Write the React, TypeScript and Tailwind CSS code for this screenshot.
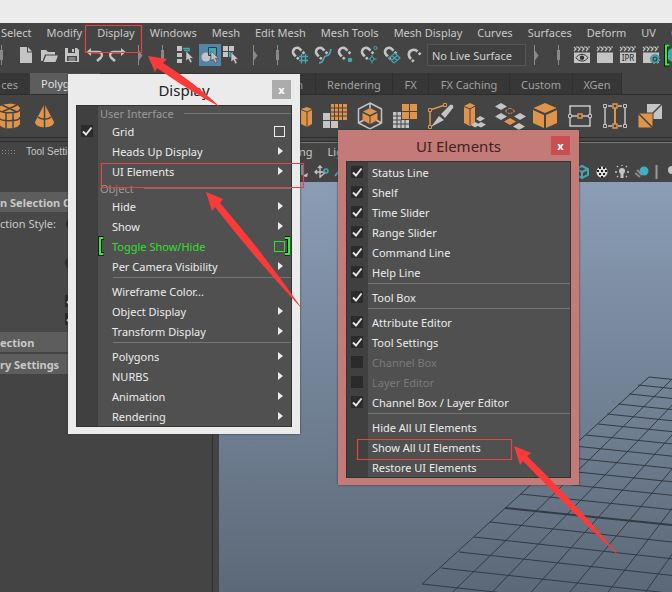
import React from 'react';
import clsx from 'clsx';

const MENUS = [
    'Select', 'Modify', 'Display', 'Windows', 'Mesh', 'Edit Mesh', 'Mesh Tools',
    'Mesh Display', 'Curves', 'Surfaces', 'Deform', 'UV', 'Cache',
];

const ORANGE = '#e0944a';
const LIGHT = '#c4c4c4';
const TEAL = '#45a5b3';

type MenuEntry = {
    label?: string;
    kind: 'item' | 'submenu' | 'option' | 'check' | 'header' | 'separator';
    checked?: boolean;
    disabled?: boolean;
    optionBox?: boolean;
    isNew?: boolean;
};

const displayMenu: MenuEntry[] = [
    { kind: 'header', label: 'User Interface' },
    { kind: 'check', label: 'Grid', checked: true, optionBox: true },
    { kind: 'submenu', label: 'Heads Up Display' },
    { kind: 'submenu', label: 'UI Elements' },
    { kind: 'header', label: 'Object' },
    { kind: 'submenu', label: 'Hide' },
    { kind: 'submenu', label: 'Show' },
    { kind: 'option', label: 'Toggle Show/Hide', optionBox: true, isNew: true },
    { kind: 'submenu', label: 'Per Camera Visibility' },
    { kind: 'separator' },
    { kind: 'item', label: 'Wireframe Color...' },
    { kind: 'submenu', label: 'Object Display' },
    { kind: 'submenu', label: 'Transform Display' },
    { kind: 'separator' },
    { kind: 'submenu', label: 'Polygons' },
    { kind: 'submenu', label: 'NURBS' },
    { kind: 'submenu', label: 'Animation' },
    { kind: 'submenu', label: 'Rendering' },
];

const uiElementsMenu: MenuEntry[] = [
    { kind: 'check', label: 'Status Line', checked: true },
    { kind: 'check', label: 'Shelf', checked: true },
    { kind: 'check', label: 'Time Slider', checked: true },
    { kind: 'check', label: 'Range Slider', checked: true },
    { kind: 'check', label: 'Command Line', checked: true },
    { kind: 'check', label: 'Help Line', checked: true },
    { kind: 'separator' },
    { kind: 'check', label: 'Tool Box', checked: true },
    { kind: 'separator' },
    { kind: 'check', label: 'Attribute Editor', checked: true },
    { kind: 'check', label: 'Tool Settings', checked: true },
    { kind: 'check', label: 'Channel Box', disabled: true },
    { kind: 'check', label: 'Layer Editor', disabled: true },
    { kind: 'check', label: 'Channel Box / Layer Editor', checked: true },
    { kind: 'separator' },
    { kind: 'item', label: 'Hide All UI Elements' },
    { kind: 'item', label: 'Show All UI Elements' },
    { kind: 'item', label: 'Restore UI Elements' },
];

/* ---------- status line icons, 23 x 23 ---------- */

const Cursor: React.FC<{ x: number; y: number }> = ({ x, y }) => (
    <path transform={`translate(${x} ${y})`} d="M0 0v10l2.4-2 1.8 4 2-.9-1.8-3.8h3.1z" fill={LIGHT} stroke="#444" strokeWidth=".6" />
);

const Magnet = () => (
    <g fill="none" stroke={LIGHT} strokeWidth="2.6">
        <path d="M10.500 6.700 8.700 4.900A4 4 0 0 0 3 10.500l1.800 1.800" />
        <path d="m11.600 7.800 1.800 1.800M5.900 13.400l1.800 1.800" />
    </g>
);

const Clapper: React.FC<{ children?: React.ReactNode }> = ({ children }) => (
    <>
        <path d="M2 8.500h16v10.500H2z" fill={LIGHT} />
        <path d="m2 3 2 2-2 2M6 3l2 2-2 2M10 3l2 2-2 2M14 3l2 2-2 2M4 3h2M8 3h2M12 3h2M16 3h2" fill="none" stroke={LIGHT} strokeWidth="1.200" />
        {children}
    </>
);

const statusIcons: Record<string, React.ReactNode> = {
    handle: (
        <>
            <path d="M9.500 1v20" stroke="#8a8a8a" />
            <path d="M8 6h3v10H8z" fill="#8a8a8a" />
        </>
    ),
    collapse: (
        <>
            <path d="M8.500 1v20" stroke="#8a8a8a" />
            <path d="m8.500 6 4 5.500-4 5.500z" fill="#8a8a8a" />
        </>
    ),
    newScene: <path d="M5 3h7v5.500h5V19H5zM13 3l4 4.500h-4z" fill={LIGHT} />,
    open: <path d="M3 17V6h5l2 2h7v2.500H7L4.500 17zM5.500 18 8 11.500h12L17.500 18z" fill={LIGHT} />,
    save: (
        <>
            <path d="M4 4h12l2 2v12H4z" fill={LIGHT} />
            <path d="M7 4h7v5H7zM6 12h10v5H6z" fill="#444" />
            <path d="M11 5h2v3h-2zM7.500 13.500h7v1h-7zM7.500 15.500h7v1h-7z" fill={LIGHT} />
        </>
    ),
    undo: (
        <>
            <path d="M6 8h8.500c4 0 4 4 2.500 5.500L13 17" fill="none" stroke={LIGHT} strokeWidth="2.400" />
            <path d="m2.500 8 4.500-4v8z" fill={LIGHT} />
        </>
    ),
    redo: (
        <>
            <path d="M15 8H6.500c-4 0-4 4-2.500 5.500L8 17" fill="none" stroke={LIGHT} strokeWidth="2.400" />
            <path d="M18.500 8 14 4v8z" fill={LIGHT} />
        </>
    ),
    selHierarchy: (
        <>
            <path d="M1 2h5v5H1zM1 9h5v4H1zM1 15h5v4H1z" fill={LIGHT} />
            <path d="M7 4.500h6v3M8 6.500h3v4" fill="none" stroke={TEAL} strokeWidth="1.500" />
            <Cursor x={10} y={7} />
        </>
    ),
    selObject: (
        <>
            <path d="M0 0h22v22H0z" fill="#5285a6" />
            <circle cx="7" cy="13" r="4.500" fill={LIGHT} />
            <path d="M9.500 3.500h8v8h-8z" fill={TEAL} stroke="#2d3e48" />
            <Cursor x={12} y={7} />
        </>
    ),
    selComponent: (
        <>
            <path d="M1 2h5v5H1zM7 2h5v5H7zM1 8h5v5H1z" fill={LIGHT} />
            <path d="M7 8h4v5H7z" fill={TEAL} />
            <Cursor x={9} y={8} />
        </>
    ),
    snapGrid: (
        <>
            <Magnet />
            <path d="M8 12.500h9M8 16.500h9M10.500 10v9.500M14.500 10v9.500" stroke={TEAL} strokeWidth="1.300" />
        </>
    ),
    snapCurve: (
        <>
            <Magnet />
            <path d="M5 19c6 0 3-6 7-7s4-3 5-7" fill="none" stroke={TEAL} strokeWidth="1.800" />
        </>
    ),
    snapPoint: (
        <>
            <Magnet />
            <circle cx="13" cy="16" r="2.300" fill={TEAL} />
        </>
    ),
    snapCenter: (
        <>
            <Magnet />
            <circle cx="15.500" cy="4" r="1.600" fill="none" stroke={TEAL} />
            <circle cx="12" cy="15" r="2" fill="none" stroke={TEAL} />
            <path d="M12 11v2M12 17v2.500M8.500 15H10M14 15h2.500" stroke={TEAL} />
        </>
    ),
    snapPlane: (
        <>
            <Magnet />
            <path d="m12 9 5 5-6 5-5-5zM9 11.500l5 5M14.500 11.500l-6 5" fill="none" stroke={TEAL} strokeWidth="1.200" />
        </>
    ),
    live: (
        <g fill="none" stroke={LIGHT} strokeWidth="2.600">
            <path d="M11.500 7.500C8 4 2.500 6.500 2.800 11c.2 2 1.200 3 2.200 4" />
            <path d="m12.800 8.800 1.700 1.700M6 16l1.700 1.700" />
        </g>
    ),
    renderView: (
        <Clapper>
            <path d="M4 13.700c3-4.500 9-4.500 12 0-3 4.500-9 4.500-12 0z" fill="none" stroke="#333" />
            <circle cx="10" cy="13.700" r="2.200" fill="#333" />
        </Clapper>
    ),
    render: <Clapper />,
    ipr: (
        <Clapper>
            <text x="10" y="17" textAnchor="middle" fontSize="8" fill="#222">IPR</text>
        </Clapper>
    ),
    renderSettings: (
        <Clapper>
            <circle cx="14" cy="15" r="4.500" fill="#444" />
            <circle cx="14" cy="15" r="3.300" fill="none" stroke={TEAL} strokeWidth="1.500" />
            <circle cx="14" cy="15" r="4.500" fill="none" stroke={TEAL} strokeWidth="1.400" strokeDasharray="1.700 1.800" />
            <circle cx="14" cy="15" r="1.200" fill={TEAL} />
        </Clapper>
    ),
    hypershade: (
        <>
            <circle cx="10" cy="11" r="7" fill={TEAL} />
            <path d="M5.500 1.500H2v19h3.500" fill="none" stroke="#111" strokeWidth="4" />
            <path d="M5.500 1.500H2v19h3.500" fill="none" stroke="#2cf02c" strokeWidth="2" />
        </>
    ),
};

const StatusButton: React.FC<{ name: string }> = ({ name }) => (
    <button type="button" aria-label={name} className="h-[23px] w-[23px] shrink-0">
        <svg width="23" height="23" viewBox="0 0 23 23">{statusIcons[name]}</svg>
    </button>
);

const statusLeft = [
    'handle', 'newScene', 'open', 'save', 'undo', 'redo', 'collapse', 'handle', 'selHierarchy', 'selObject',
    'selComponent', 'collapse', 'handle', 'snapGrid', 'snapCurve', 'snapPoint', 'snapCenter', 'snapPlane', 'live',
];
const statusRight = ['collapse', 'handle', 'renderView', 'render', 'ipr', 'renderSettings', 'hypershade'];

/* ---------- shelf icons, 28 x 28 ---------- */

const shelfIcons: Record<string, React.ReactNode> = {
    cylinder: (
        <>
            <path d="M3 7c0-7 21-7 21 0v14c0 7-21 7-21 0z" fill={ORANGE} />
            <path d="M3 7c0 5 21 5 21 0M3 15c0 5 21 5 21 0M10 11v15M17 11v15M6 3l15 7M21 3 6 10" fill="none" stroke="#444" strokeWidth="1.500" />
        </>
    ),
    cone: (
        <>
            <path d="M13.500 2 23 20c0 7-19 7-19 0z" fill={ORANGE} />
            <path d="M13.500 2v24M7 15c3 3 10 3 13 0" fill="none" stroke="#444" strokeWidth="1.500" />
        </>
    ),
    cube: (
        <>
            <path d="m21 5 5 2v15l-5 3-6-3V7z" fill={ORANGE} />
            <path d="M15 7.500 21 10l5-2.500M21 10v15" fill="none" stroke="#444" />
            <path d="M13 2v24" stroke={LIGHT} strokeDasharray="2 2" />
        </>
    ),
    smooth: (
        <>
            <path d="M10 2h16v16H10z" fill={ORANGE} />
            <path d="M13.500 2v16M17.500 2v16M21.500 2v16M10 6h16M10 10h16M10 14h16" stroke="#444" />
            <path d="M2 11h7v7H2zM2 19h7v7H2zM10 19h7v7h-7z" fill={LIGHT} />
        </>
    ),
    cage: (
        <>
            <path d="m14 1 11.500 6v14L14 27 2.500 21V7zM14 1v5M2.500 21 8 18M25.500 21 20 18" fill="none" stroke={LIGHT} strokeWidth="1.500" />
            <path d="m14 6 7 3.500-7 3.500-7-3.500zM6.500 11l7 3.500V22l-7-4zM21.500 11l-7 3.500V22l7-4z" fill={ORANGE} />
        </>
    ),
    reduce: (
        <>
            <path d="M11 2h7v7h-7zM19 2h7v7h-7zM11 10h7v7h-7zM19 10h7v7h-7z" fill={ORANGE} />
            <path d="M2 10h8v8h8v8H2z" fill={LIGHT} />
            <path d="M6 10v16M10 18v8M14 18v8M2 14h8M2 18h8M2 22h16" stroke="#444" />
        </>
    ),
    draw: (
        <>
            <path d="M4 8v17M4 8l15-5" stroke={ORANGE} strokeWidth="1.500" />
            <path d="M2.500 6.500h3v3h-3zM17.500 1.500h3v3h-3zM2.500 23.500h3v3h-3z" fill="#444" stroke={ORANGE} />
            <path d="m5 25 8-11 5 4zM15 12l9-9c3-1 4 1 3 3l-8 10z" fill={LIGHT} />
        </>
    ),
    extrude: (
        <>
            <path d="m9 1 5 2.500v17L9 24l-6-3V4z" fill={ORANGE} />
            <path d="m3 4.500 6 2.500 5-3M9 7v16" fill="none" stroke="#444" />
            <path d="m19 14 5 2.500-5 3-4-2.500zM14 20l5 2.500-5 3-4-2.500zM20 20l5 2.500-5 3-5-2.500z" fill={LIGHT} />
        </>
    ),
    faces: (
        <>
            <path d="m5 1 6 3.500-6 3.500-6-3.500zM5 11l6 3.500L5 18l-6-3.500zM24 11l6 3.500-6 3.500-6-3.500zM23 21l6 3.500-6 3.500-6-3.500z" fill={LIGHT} />
            <path d="m14 16 6 3.500-6 3.500-6-3.500z" fill={ORANGE} />
            <path d="m14 6 5 3-5 3-5-3z" fill="none" stroke={ORANGE} strokeDasharray="2 1" />
        </>
    ),
    solid: <path d="m14 1 11.500 5L14 11 2.500 6zM2 8l11 5v13L2 21zM26 8l-11 5v13l11-5z" fill={ORANGE} />,
    insertLoop: (
        <>
            <path d="M4 4h20v20H4z" fill="none" stroke={LIGHT} strokeWidth="1.500" />
            <path d="M4 14h20" stroke={LIGHT} strokeWidth="1.500" />
            <path d="M2.500 12.500h3v3h-3zM22.500 12.500h3v3h-3z" fill="#444" stroke={LIGHT} />
            <path d="M12 12h4v4h-4z" fill="#444" stroke={ORANGE} strokeWidth="1.500" />
        </>
    ),
    offsetLoop: (
        <>
            <path d="M4 4v20M24 4v20M7 4h4M17 4h4M7 24h4M17 24h4" fill="none" stroke={LIGHT} strokeWidth="1.500" />
            <path d="M14 4v20" stroke={ORANGE} strokeWidth="2" />
            <path d="M2.500 2.500h3v3h-3zM22.500 2.500h3v3h-3zM2.500 22.500h3v3h-3zM22.500 22.500h3v3h-3z" fill="#444" stroke={LIGHT} />
            <path d="M12 2h4v4h-4zM12 22h4v4h-4z" fill="#444" stroke={ORANGE} strokeWidth="1.500" />
        </>
    ),
    triangulate: (
        <>
            <path d="M11 2h15v15H11z" fill={LIGHT} />
            <path d="M2 11h15v15H2z" fill={ORANGE} stroke="#444" />
            <path d="m17 11 9-9M2 11l15 15" stroke="#444" strokeWidth="1.500" />
        </>
    ),
};

const ShelfButton: React.FC<{ name: string }> = ({ name }) => (
    <button type="button" aria-label={name} className="flex w-[35px] shrink-0 justify-center">
        <svg width="28" height="28" viewBox="0 0 28 28" className="overflow-visible">{shelfIcons[name]}</svg>
    </button>
);

const shelfTabs = [
    { label: 'Rendering', width: 'w-[77px]' },
    { label: 'FX', width: 'w-[36px]' },
    { label: 'FX Caching', width: 'w-[81px]' },
    { label: 'Custom', width: 'w-[63px]' },
    { label: 'XGen', width: 'w-[49px]' },
];

/* ---------- menus ---------- */

type CheckBoxProps = { id: string; label?: string; checked?: boolean; disabled?: boolean };

const CheckBox: React.FC<CheckBoxProps> = ({ id, label, checked, disabled }) => (
    <span className="relative flex h-3 w-3 bg-[#2b2b2b]">
        <input id={id} type="checkbox" aria-label={label} defaultChecked={checked} disabled={disabled} className="peer h-3 w-3 appearance-none" />
        <svg viewBox="0 0 12 12" className="pointer-events-none absolute inset-0 hidden peer-checked:block">
            <path d="m2 6.500 3 3L10.500 2.500" fill="none" stroke="#e6e6e6" strokeWidth="1.900" />
        </svg>
    </span>
);

const MenuRow: React.FC<{ entry: MenuEntry; id: string; compact?: boolean }> = ({ entry, id, compact }) => {
    const indent = compact ? 'pl-[5px]' : 'pl-[15px]';

    if (entry.kind === 'separator') {
        return (
            <div className={clsx('flex h-[5px] items-start pt-px', compact ? 'ml-[21px]' : 'ml-[36px]')}>
                <hr className="w-full border-[#757575]" />
            </div>
        );
    }
    if (entry.kind === 'header') {
        return (
            <div className="ml-[23px] flex h-[15px] items-center gap-2.5 text-[#9a9a9a]">
                <span>{entry.label}</span>
                <hr className="flex-1 border-[#757575]" />
            </div>
        );
    }
    return (
        <div className={clsx('relative flex h-5 items-center', entry.disabled ? 'text-[#7a7a7a]' : entry.isNew ? 'text-[#2ce02c]' : 'text-[#ececec]')}>
            <span className="flex w-[20px] justify-end pr-1">
                {entry.kind === 'check' && <CheckBox id={id} checked={entry.checked} disabled={entry.disabled} />}
            </span>
            {entry.kind === 'check' ? (
                <label htmlFor={id} className={clsx('flex-1', indent)}>{entry.label}</label>
            ) : (
                <button type="button" className={clsx('flex-1 text-left', indent)}>{entry.label}</button>
            )}
            {entry.kind === 'submenu' && (
                <svg width="5" height="8" viewBox="0 0 5 8" className="mr-2"><path d="M0 0l5 4-5 4z" fill="#ececec" /></svg>
            )}
            {entry.optionBox && (
                <button type="button" aria-label={`${entry.label} options`} className="mr-1.5 h-[11px] w-[11px] border border-current" />
            )}
            {entry.isNew && (
                <svg width="192" height="20" viewBox="0 0 192 20" className="pointer-events-none absolute left-[21px] top-0">
                    <g fill="none">
                        <path d="M6 2H2v16h4M187 2h4v16h-4" stroke="#111" strokeWidth="4" />
                        <path d="M5.500 2H2v16h3.500M187 2h4v16h-4" stroke="#2cf02c" strokeWidth="2" />
                    </g>
                </svg>
            )}
        </div>
    );
};

type TornOffMenuProps = { title: string; entries: MenuEntry[]; active?: boolean; compact?: boolean; className: string };

const TornOffMenu: React.FC<TornOffMenuProps> = ({ title, entries, active, compact, className }) => (
    <section className={clsx('absolute shadow-[0_0_2px_#333]', className, active ? 'bg-[#c47a76]' : 'bg-[#ebebeb]')}>
        <header className="relative flex h-[31px] items-center justify-center">
            <h2 className={clsx('text-[15px] leading-5', active ? 'text-[#3d2322]' : 'text-[#222]')}>{title}</h2>
            <button
                type="button"
                aria-label={`Close ${title}`}
                className={clsx('absolute right-[9px] top-1.5 h-[19px] w-[19px] text-[11px] font-bold leading-4 text-white', active ? 'bg-[#c94f50]' : 'bg-[#acacac]')}
            >
                x
            </button>
        </header>
        <div className="mx-2 mb-[7px] border border-[#333] bg-[linear-gradient(to_right,#404040_21px,#505050_21px)]">
            {entries.map((entry, i) => (
                <MenuRow key={i} entry={entry} id={`${title}-${i}`} compact={compact} />
            ))}
        </div>
    </section>
);

/* ---------- perspective grid ---------- */

const rowStarts = [
    [649, 377], [638, 385], [629, 394], [618, 404], [607, 414], [598, 424], [586, 435], [574, 446],
    [562, 457], [548, 469], [534, 481], [520, 494], [490, 522], [474, 537], [459, 552], [441, 568], [422, 584],
];

const ViewportGrid = () => (
    <svg width="453" height="410" viewBox="219 182 453 410" className="absolute left-0 top-0" fill="none" stroke="#343b42">
        <path d="M649 377 422 584" />
        {rowStarts.map(([x, y]) => (
            <path key={y} d={`M${x} ${y}l300 ${y > 500 ? 33 : 31}`} />
        ))}
        {[1, 2, 3, 4, 5, 6, 7].map((k) => {
            const x = 505 + 31 * k;
            const y = 508 + 3.2 * k;
            const dx = 144 - 8 * k;
            const dy = -131 - k;
            return <path key={k} d={`M${x + dx} ${y + dy}L${x - dx} ${y - dy}`} />;
        })}
        <path d="m505 508 167 17" strokeWidth="2" />
    </svg>
);

const Annotations = () => (
    <svg width="672" height="592" viewBox="0 0 672 592" className="pointer-events-none absolute left-0 top-0">
        <path
            d="M85.500 25.500h56v27h-56zM101.500 163.500h202v24h-202zM357.500 439.500h154v20h-154z"
            fill="none"
            stroke="#e64340"
            strokeWidth="1.200"
        />
        <g fill="#fb3b3a">
            <path d="m148 56 19 3-4 4Q194 82 220 107 188 90 157 68l-2 4z" />
            <path d="m206 192 17 7-3 4Q264 254 303 310 257 261 215 207l-3 4z" />
            <path d="m514 446 17 7-4 3Q576 503 620 557 571 511 523 461l-3 4z" />
        </g>
    </svg>
);

export default function App() {
    return (
        <div className="relative flex min-h-screen flex-col overflow-hidden bg-[#444] font-['Noto_Sans','Open_Sans',sans-serif] text-[11px] leading-[15px] text-[#c8c8c8]">
            <div className="h-[23px] shrink-0 bg-[#ebebeb]" />
            <nav className="flex h-[21px] shrink-0 items-center gap-[15px] overflow-hidden whitespace-nowrap pb-0.5 pl-px">
                {MENUS.map((m) => (
                    <button key={m} type="button">{m}</button>
                ))}
            </nav>

            <div className="-ml-2 flex h-[29px] shrink-0 overflow-hidden">
                {statusLeft.map((name, i) => <StatusButton key={i} name={name} />)}
                <input
                    aria-label="Live surface"
                    readOnly
                    value="No Live Surface"
                    className="-ml-0.5 h-[22px] w-[99px] shrink-0 border border-[#555] bg-[#404040] pl-1 text-[#d0d0d0]"
                />
                {statusRight.map((name, i) => <StatusButton key={i} name={name} />)}
            </div>

            <div className="flex h-[22px] shrink-0 border-b border-[#2e2e2e] text-[#a0a0a0]">
                <button type="button" className="w-[30px] bg-[#373737] pr-3 pt-0.5 text-right">ces</button>
                <button type="button" className="w-[70px] bg-[#5d5d5d] pl-[11px] text-left text-[#e0e0e0]">Polyg</button>
                <button type="button" className="w-[216px] border-r border-[#2f2f2f] bg-[#373737] pr-3 pt-0.5 text-right">n</button>
                {shelfTabs.map((t) => (
                    <button key={t.label} type="button" className={clsx('shrink-0 border-r border-[#2f2f2f] bg-[#373737] pt-0.5', t.width)}>{t.label}</button>
                ))}
            </div>
            <div className="-ml-2 flex h-[42px] shrink-0 items-center overflow-hidden">
                {['cylinder', 'cone'].map((n) => <ShelfButton key={n} name={n} />)}
                <div className="w-[220px] shrink-0" />
                {['cube', 'smooth', 'cage', 'reduce', 'draw', 'extrude', 'faces', 'solid', 'insertLoop', 'offsetLoop', 'triangulate'].map((n) => (
                    <ShelfButton key={n} name={n} />
                ))}
            </div>
            <div className="h-[5px] shrink-0 border-y border-[#2e2e2e]" />

            <div className="flex flex-1">
                <aside className="w-[213px] shrink-0 border-r border-[#2e2e2e] whitespace-nowrap">
                    <div className="flex h-[50px] items-start gap-2.5 pt-0.5 font-['Liberation_Sans',sans-serif] text-[10px]">
                        <svg width="16" height="15" viewBox="0 0 16 15" className="shrink-0">
                            <path d="M2 6.500h14M2 9.500h14" stroke="#8a8a8a" strokeDasharray="1 2" />
                        </svg>
                        <span>Tool Setting</span>
                    </div>
                    <h3 className="flex h-5 items-center bg-[#5d5d5d] font-bold text-[#c8c8c8]">n Selection O</h3>
                    <div className="flex h-[120px] flex-col bg-[#484848] pt-1">
                        <label className="flex items-center gap-2.5">
                            <span>ction Style:</span>
                            <input type="radio" name="style" defaultChecked className="h-3 w-3 appearance-none rounded-full bg-[#2b2b2b]" />
                        </label>
                        <div className="flex h-[52px] items-center pl-[65px] pt-3">
                            <input type="radio" name="style" aria-label="Drag style" className="h-3 w-3 appearance-none rounded-full bg-[#2b2b2b]" />
                        </div>
                        <div className="flex flex-col gap-1.5 pl-[65px] pt-3">
                            <CheckBox id="auto" label="Auto select" checked />
                            <CheckBox id="camera" label="Camera based" checked />
                        </div>
                    </div>
                    <h3 className="flex h-5 items-center bg-[#5d5d5d] font-bold">ection</h3>
                    <h3 className="mt-0.5 flex h-5 items-center bg-[#5d5d5d] font-bold">ry Settings</h3>
                </aside>
                <div className="w-1.5 shrink-0" />
                <main className="flex min-w-0 flex-1 flex-col">
                    <div className="flex h-5 items-center gap-[15px] overflow-hidden border-t border-[#777] pb-0.5 pl-[80px]">
                        <button type="button">ng</button>
                        <button type="button">Lig</button>
                    </div>
                    <div className="flex h-5 items-center justify-between pl-[82px]">
                        <svg width="40" height="18" viewBox="0 0 40 18" fill="none">
                            <path d="M0 2h3v10H0z" fill={TEAL} />
                            <path d="m1 13 6-3-1 4z" fill={LIGHT} />
                            <path d="M19 3v12M14 9h9M17 5l2-2 2 2M16 7l-2 2 2 2M25 9l-6 5" stroke={LIGHT} strokeWidth="1.300" />
                            <circle cx="25" cy="8" r="2" stroke={TEAL} strokeWidth="1.500" />
                            <path d="m34 13 4-5" stroke={TEAL} strokeWidth="2" />
                        </svg>
                        <svg width="95" height="18" viewBox="577 162 95 18" fill="none">
                            <path d="m582 165 6 3v6l-6 3-5-3v-6zM577 168l5 3 6-3M582 171v6" stroke={TEAL} strokeWidth="2" />
                            <circle cx="602" cy="171" r="5.500" fill="#ddd" />
                            <path d="M599 166h2v2h-2zM603 166h2v2h-2zM597 169h2v2h-2zM601 169h2v2h-2zM605 169h2v2h-2zM599 172h2v2h-2zM603 172h2v2h-2zM601 175h2v2h-2z" fill="#222" />
                            <circle cx="622" cy="170" r="3" fill={LIGHT} />
                            <path d="M622 171v6" stroke={LIGHT} strokeWidth="3" />
                            <path d="M615 171h2M627 171h2M617 165l1 1M627 165l-1 1M622 164v1M617 176l1-1M627 176l-1-1" stroke={LIGHT} strokeWidth="1.400" />
                            <path d="m635 172 5 4M637 169l5 5" stroke="#888" strokeWidth="2" />
                            <circle cx="644" cy="170" r="4.500" fill="#3fb0bf" />
                            <path d="M656.500 164v14" stroke="#999" strokeWidth="2" />
                            <circle cx="672" cy="169" r="4" fill={LIGHT} />
                        </svg>
                    </div>
                    <div className="relative flex-1 overflow-hidden bg-[linear-gradient(to_bottom,#8a9db5,#5c6978)]">
                        <ViewportGrid />
                    </div>
                </main>
            </div>

            <TornOffMenu title="Display" entries={displayMenu} className="left-[68px] top-[74px] w-[232px]" />
            <TornOffMenu title="UI Elements" entries={uiElementsMenu} active compact className="left-[338px] top-[130px] w-[241px]" />
            <Annotations />
        </div>
    );
}
